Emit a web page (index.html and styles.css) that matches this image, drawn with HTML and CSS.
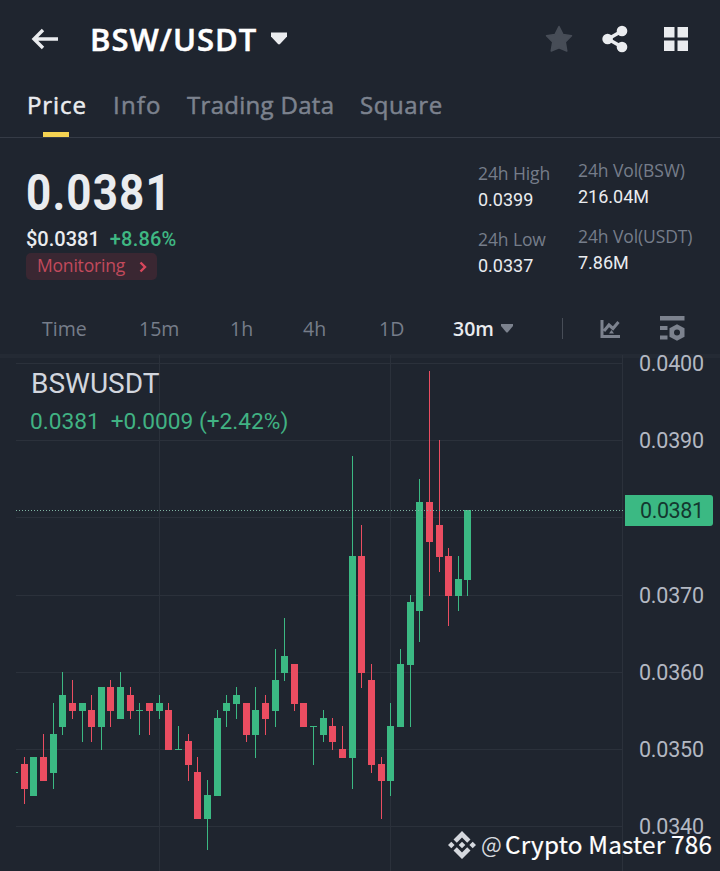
FILE: index.html
```html
<!DOCTYPE html>
<html lang="en">
<head>
    <meta charset="UTF-8">
    <meta name="viewport" content="width=device-width, initial-scale=1.0">
    <title>BSW/USDT</title>
    <link rel="stylesheet" href="styles.css">
</head>
<body>
    <header class="topbar">
        <svg class="icon-back" width="28" height="22" viewBox="0 0 28 22"><path d="M12 2L3 11l9 9M3 11h24" fill="none" stroke="#eaecef" stroke-width="3.4"/></svg>
        <h1>BSW/USDT</h1>
        <svg class="icon-caret" width="16" height="13" viewBox="0 0 16 13"><path d="M0 .5h16v4L9 12q-1 .8-2 0L0 4.500z" fill="#eaecef"/></svg>
        <div class="actions">
            <svg width="28" height="28" viewBox="0 0 28 28"><path d="M14 1.500l4 8 8.500 1.300-6.200 6.200 1.500 9L14 22.700 6.200 26l1.500-9L1.500 10.800 10 9.500z" fill="#474d57" stroke="#474d57" stroke-width="1.500" stroke-linejoin="round"/></svg>
            <svg width="26" height="28" viewBox="0 0 26 28"><path d="M20 6L6 14l14 8" fill="none" stroke="#eaecef" stroke-width="3.500"/><g fill="#eaecef"><circle cx="20" cy="6" r="5.300"/><circle cx="5.600" cy="14" r="5.300"/><circle cx="20" cy="22" r="5.300"/></g></svg>
            <svg width="24" height="24" viewBox="0 0 24 24"><path d="M0 0h10.500v10.500H0zM13.500 0H24v10.500H13.500zM0 13.500h10.500V24H0zM13.500 13.500H24V24H13.500z" fill="#eaecef"/></svg>
        </div>
    </header>

    <nav class="tabs">
        <a class="tab active">Price</a>
        <a class="tab tab-info">Info</a>
        <a class="tab tab-data">Trading Data</a>
        <a class="tab tab-square">Square</a>
    </nav>

    <section class="ticker">
        <div class="price-box">
            <div class="last-price">0.0381</div>
            <div class="fiat"><span>$0.0381</span><span class="up">+8.86%</span></div>
            <div class="tag"><span>Monitoring</span><svg width="8" height="12" viewBox="0 0 8 12"><path d="M1.500 1.500L6 6l-4.500 4.500" fill="none" stroke="#d8475c" stroke-width="2.400"/></svg></div>
        </div>
        <div class="stats stats-range">
            <div class="label">24h High</div>
            <div class="value">0.0399</div>
            <div class="label">24h Low</div>
            <div class="value">0.0337</div>
        </div>
        <div class="stats stats-vol">
            <div class="label">24h Vol(BSW)</div>
            <div class="value">216.04M</div>
            <div class="label">24h Vol(USDT)</div>
            <div class="value">7.86M</div>
        </div>
    </section>

    <div class="intervals">
        <span class="iv-time">Time</span>
        <span class="iv-15m">15m</span>
        <span class="iv-1h">1h</span>
        <span class="iv-4h">4h</span>
        <span class="iv-1d">1D</span>
        <span class="iv-30m active">30m</span>
        <svg class="iv-caret" width="12" height="9" viewBox="0 0 12 9"><path d="M0 0h12v2L7 8q-1 1-2 0L0 2z" fill="#7c828e"/></svg>
        <i class="iv-sep"></i>
        <svg class="iv-chart" width="20" height="20" viewBox="0 0 20 20"><path d="M2 1v16.500h18M4 12l5-6 4 3.500L18.500 3" fill="none" stroke="#7c828e" stroke-width="3"/><path d="M11.500 11l2.500 3.500H9z" fill="#7c828e"/></svg>
        <svg class="iv-settings" width="25" height="26" viewBox="0 0 25 26"><path d="M0 0h24.500v4.500H0zM0 10h7.500v4H0zM0 19.500h7.500v4H0z" fill="#7c828e"/><path d="M17 8.300l7.500 4v8.400l-7.500 4-7.500-4v-8.400zM17 13.500a3 3 0 1 0 0 6 3 3 0 0 0 0-6z" fill="#7c828e" fill-rule="evenodd"/></svg>
    </div>

    <main class="chart">
        <svg id="kline" class="kline" width="720" height="513" viewBox="0 358 720 513"></svg>
        <div class="legend">
            <div class="symbol">BSWUSDT</div>
            <div class="change"><span>0.0381</span><span>+0.0009 (+2.42%)</span></div>
        </div>
        <div class="watermark">
            <svg width="28" height="28" viewBox="0 0 28 28"><path d="M14 0l8.500 8.500-3.300 3.300L14 6.600l-5.200 5.200-3.300-3.300zM14 28l8.500-8.500-3.300-3.300-5.200 5.200-5.200-5.200-3.300 3.300zM14 10.700l3.300 3.300-3.300 3.300-3.300-3.300zM3.300 10.700L6.600 14l-3.300 3.300L0 14zM24.700 10.700L28 14l-3.300 3.300-3.300-3.300z" fill="#d5d8de"/></svg>
            <span class="at">@</span>
            <span class="author">Crypto Master 786</span>
        </div>
    </main>

    <script src="chart.js"></script>
</body>
</html>
```

FILE: styles.css
```css
* {
    box-sizing: border-box;
}
body {
    margin: 0;
    width: 720px;
    height: 871px;
    overflow: hidden;
    background: #1f252f;
    color: #eaecef;
    font-family: "Open Sans", "Noto Sans", sans-serif;
    white-space: nowrap;
}
svg {
    display: block;
    flex: none;
}

/* top bar */
.topbar {
    display: flex;
    align-items: center;
    height: 78px;
    padding: 0 31px 1px 31px;
}
h1 {
    margin: 1px 0 0 31px;
    width: 168px;
    font-size: 31px;
    font-weight: 600;
    line-height: 40px;
    letter-spacing: 1px;
    -webkit-text-stroke: .5px;
    color: #fff;
}
.icon-caret {
    margin-left: 13px;
}
.actions {
    display: flex;
    align-items: center;
    margin: 0 1px 0 auto;
}
.actions svg + svg {
    margin-left: 29px;
}
.actions svg:last-child {
    margin-left: 36px;
}

/* tabs */
.tabs {
    display: flex;
    height: 60px;
    padding-left: 27px;
    border-bottom: 1px solid #353b46;
    font-size: 24px;
    line-height: 54px;
    letter-spacing: .3px;
    -webkit-text-stroke: .5px;
    color: #7c828e;
}
.tab.active {
    position: relative;
    width: 86px;
    letter-spacing: .9px;
    color: #eaecef;
}
.tab.active::after {
    content: "";
    position: absolute;
    left: 16px;
    bottom: 0;
    width: 26px;
    height: 5px;
    background: #f5d352;
}
.tab-info {
    width: 74px;
    letter-spacing: 1.2px;
}
.tab-data {
    width: 173px;
}
.tab-square {
    letter-spacing: .6px;
}

/* ticker */
.ticker {
    display: flex;
    height: 165px;
    padding-left: 26px;
}
.price-box {
    width: 452px;
    font-family: Roboto, sans-serif;
}
.last-price {
    margin-top: 25px;
    height: 62px;
    font-size: 50px;
    line-height: 60px;
    font-weight: 700;
    letter-spacing: 1.3px;
    transform: scaleX(.88);
    transform-origin: left;
}
.fiat {
    display: flex;
    gap: 10px;
    height: 28px;
    font-size: 20px;
    font-weight: 500;
    line-height: 28px;
}
.up {
    color: #3fb883;
    letter-spacing: .2px;
}
.tag {
    display: flex;
    align-items: center;
    justify-content: space-between;
    width: 131px;
    height: 27px;
    padding: 0 10px 0 11px;
    border-radius: 5px;
    background: #3a2732;
    color: #c24a5c;
    font-family: "Open Sans", sans-serif;
    font-size: 17.5px;
    line-height: 24px;
    letter-spacing: -.2px;
}
.tag span {
    margin-bottom: 3px;
}
.stats {
    width: 100px;
    padding-top: 22px;
}
.stats-vol {
    padding-top: 19px;
}
.label {
    height: 26px;
    font-size: 17.5px;
    line-height: 26px;
    letter-spacing: -.1px;
    color: #767d8a;
}
.value {
    height: 40px;
    font-family: Roboto, sans-serif;
    font-size: 18px;
    line-height: 27px;
}

/* intervals */
.intervals {
    display: flex;
    align-items: center;
    height: 55px;
    padding-left: 42px;
    border-bottom: 4px solid #242a34;
    font-size: 19.5px;
    color: #767d8a;
}
.iv-time { width: 97px; }
.iv-15m { width: 91px; }
.iv-1h { width: 73px; }
.iv-4h { width: 76px; }
.iv-1d { width: 74px; }
.iv-30m {
    width: 48px;
    font-weight: 600;
    color: #eaecef;
}
.iv-sep {
    width: 1px;
    height: 21px;
    margin: 0 37px 0 49px;
    background: #474d57;
}
.iv-settings {
    margin-left: 40px;
}

/* chart */
.chart {
    position: relative;
    height: 513px;
    font-family: Roboto, sans-serif;
}
.kline {
    overflow: visible;
}
.grid-line {
    stroke: #2b313b;
}
.axis-label {
    font-size: 21.5px;
    fill: #b3b8c2;
}
.price-line {
    stroke: #7fb5a3;
    stroke-dasharray: 1 2;
}
.price-badge {
    fill: #3bb983;
}
.badge-text {
    font-size: 21.5px;
    fill: #14382f;
}
.candle-up {
    fill: #3bb983;
}
.candle-down {
    fill: #ea4d61;
}
.legend {
    position: absolute;
    left: 30px;
    top: 9px;
}
.symbol {
    padding-left: 1px;
    font-size: 28px;
    line-height: 34px;
    color: #d2d6de;
}
.change {
    display: flex;
    gap: 11px;
    margin-top: 7px;
    font-size: 22.7px;
    line-height: 28px;
    color: #41b283;
}
.watermark {
    position: absolute;
    left: 448px;
    top: 467px;
    display: flex;
    align-items: center;
    height: 36px;
    font-family: "Noto Sans CJK SC", sans-serif;
    font-size: 24.3px;
    color: #fff;
}
.watermark svg {
    margin-top: 3px;
}
.author {
    letter-spacing: .2px;
    -webkit-text-stroke: .2px;
}
.at {
    margin-left: 5px;
    width: 24px;
    font-size: 22px;
    color: #d5d8de;
}
```

FILE: chart.js
```js
const svg = document.getElementById('kline');

// high, body top, body bottom, low (in 0.0001), 1 = up, 0 = down
const candles = [
    [349, 348, 345, 343, 0], [349, 349, 344, 344, 1], [352, 349, 346, 346, 0], [356, 352, 347, 345, 1],
    [360, 357, 353, 352, 1], [359, 356, 355, 354, 0], [356, 356, 355, 351, 1], [357, 355, 353, 351, 0],
    [358, 358, 353, 350, 1], [359, 358, 355, 353, 0], [360, 358, 354, 354, 1], [358, 357, 355, 354, 0],
    [356, 355, 355, 352, 1], [356, 356, 355, 352, 0], [357, 356, 355, 354, 1], [356, 355, 350, 350, 0],
    [353, 350, 350, 350, 1], [352, 351, 348, 346, 0], [349, 347, 341, 341, 0], [346, 344, 341, 337, 1],
    [355, 354, 344, 344, 1], [357, 356, 355, 353, 1], [358, 357, 356, 354, 1], [356, 356, 352, 351, 0],
    [358, 355, 352, 349, 1], [357, 356, 354, 352, 0], [363, 359, 355, 353, 1], [367, 362, 360, 359, 1],
    [361, 361, 356, 355, 0], [356, 356, 353, 353, 0], [353, 353, 353, 348, 1], [355, 354, 352, 351, 1],
    [354, 353, 351, 350, 0], [353, 350, 349, 349, 0], [388, 375, 349, 345, 1], [379, 375, 360, 358, 0],
    [361, 359, 348, 347, 0], [349, 348, 346, 341, 0], [356, 353, 346, 344, 1], [363, 361, 353, 353, 1],
    [370, 369, 361, 353, 1], [385, 382, 368, 364, 1], [399, 382, 377, 370, 0], [390, 379, 375, 373, 0],
    [376, 375, 370, 366, 0], [375, 372, 370, 368, 1], [381, 381, 372, 370, 1]
];

function add(name, attrs, text) {
    const el = document.createElementNS('http://www.w3.org/2000/svg', name);
    for (const key in attrs) el.setAttribute(key, attrs[key]);
    if (text) el.textContent = text;
    svg.appendChild(el);
}

function priceY(p) {
    return Math.floor(363.5 + (400 - p) * 7.72);
}

// grid and price scale
for (let p = 400; p >= 340; p -= 10) {
    const y = priceY(p) + 0.5;
    add('line', { class: 'grid-line', x1: 16, x2: 622, y1: y, y2: y });
    if (p !== 380) add('text', { class: 'axis-label', x: 639, y: y + 7.5, textLength: 65 }, '0.0' + p);
}
[159.5, 390.5, 622.5].forEach(x => add('line', { class: 'grid-line', x1: x, x2: x, y1: 355, y2: 871 }));

// candles
add('rect', { class: 'candle-up', x: 16, y: priceY(347), width: 2, height: 1 });
candles.forEach(([high, top, bottom, low, up], i) => {
    const x = Math.floor(24.13 + i * 9.649);
    const cls = up ? 'candle-up' : 'candle-down';
    add('rect', { class: cls, x: x, y: priceY(high), width: 1, height: priceY(low) - priceY(high) + 1 });
    add('rect', { class: cls, x: x - 3, y: priceY(top), width: 7, height: priceY(bottom) - priceY(top) + 1 });
});

// last price
add('line', { class: 'price-line', x1: 16, x2: 624, y1: 510.5, y2: 510.5 });
add('path', { class: 'price-badge', d: 'M625 495h85q3 0 3 3v25q0 3-3 3h-85z' });
add('text', { class: 'badge-text', x: 640, y: 518, textLength: 64 }, '0.0381');
```
